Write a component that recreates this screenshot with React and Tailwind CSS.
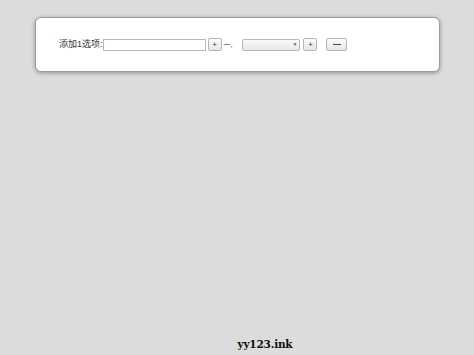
import React from 'react';

const cjk = { fontFamily: '"Liberation Sans", "Noto Sans CJK SC", sans-serif' };

function SmallBtn({ children, className = '' }) {
  return (
    <button
      type="button"
      className={`flex h-[13px] items-center justify-center rounded-[2px] border border-[#b5b5b5] bg-gradient-to-b from-[#fbfbfb] to-[#e6e6e6] text-[8px] leading-none text-[#333] ${className}`}
    >
      {children}
    </button>
  );
}

export default function App() {
  return (
    <div className="relative h-[355px] w-full bg-[#dcdcdc]" style={cjk}>
      <div className="pt-[17px] pl-[35px]">
        <div className="flex h-[55px] w-[405px] items-center rounded-[6px] border border-[#9a9a9a] bg-white pl-[23px] shadow-[0_1px_4px_rgba(0,0,0,0.35)]">
          <span className="text-[9px] leading-none text-[#333]">添加1选项:</span>
          <input
            type="text"
            className="h-[12px] w-[103px] border border-[#b8b8b8] bg-white outline-none"
          />
          <SmallBtn className="ml-[2px] w-[14px]">+</SmallBtn>
          <span className="ml-[2px] text-[7px] leading-none text-[#333]">一,</span>
          <div className="ml-[10px] flex h-[12px] w-[58px] items-center justify-end rounded-[2px] border border-[#b8b8b8] bg-gradient-to-b from-[#fafafa] to-[#e8e8e8] pr-[2px]">
            <span className="text-[5px] leading-none text-[#666]">▼</span>
          </div>
          <SmallBtn className="ml-[3px] w-[14px]">+</SmallBtn>
          <SmallBtn className="ml-[9px] w-[21px]">
            <span className="block h-[1px] w-[8px] bg-[#444]" />
          </SmallBtn>
        </div>
      </div>
      <div
        className="absolute bottom-[6px] left-0 right-0 pl-[56px] text-center text-[10.5px] font-black leading-none tracking-[-0.2px] text-[#111]"
        style={{ fontFamily: '"DejaVu Serif", serif' }}
      >
        yy123.ink
      </div>
    </div>
  );
}
